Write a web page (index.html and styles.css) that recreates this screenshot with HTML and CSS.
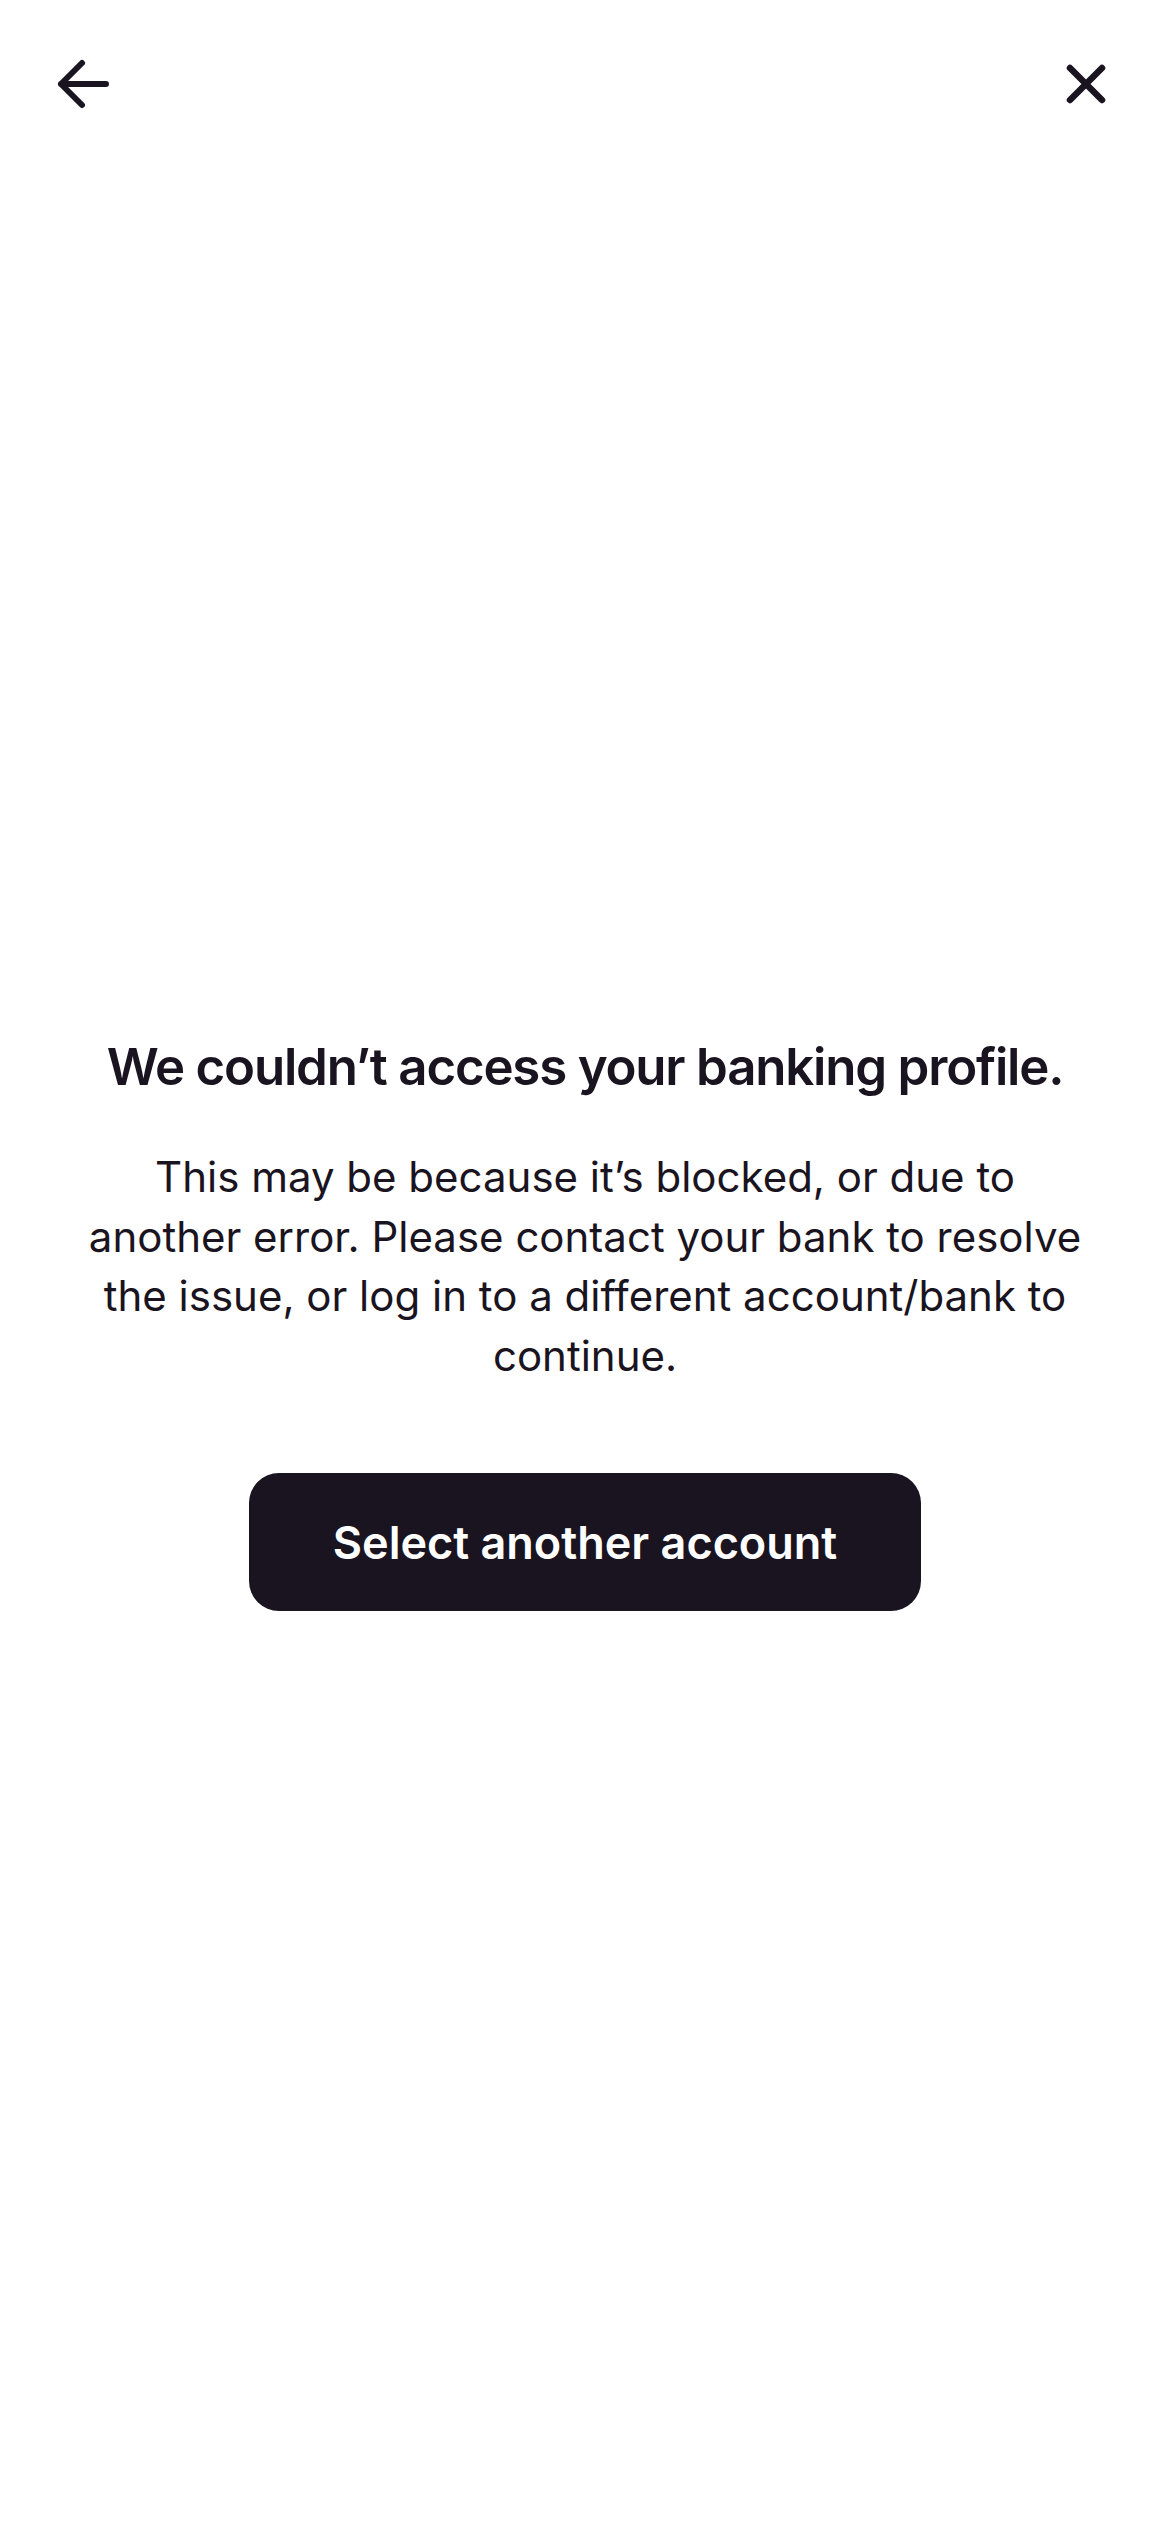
FILE: index.html
```html
<!DOCTYPE html>
<html lang="en">
<head>
    <meta charset="UTF-8">
    <meta name="viewport" content="width=device-width, initial-scale=1.0">
    <title>Access error</title>
    <link rel="stylesheet" href="styles.css">
</head>
<body>
    <header class="top-bar">
        <button type="button" class="icon-btn back-btn" aria-label="Back">
            <svg width="56" height="56" viewBox="0 0 56 56" fill="none">
                <path d="M27 7 L6 28 L27 49 M6 28 L51 28" stroke="#1a1421" stroke-width="6" stroke-linecap="round" stroke-linejoin="round"/>
            </svg>
        </button>
        <button type="button" class="icon-btn close-btn" aria-label="Close">
            <svg width="48" height="48" viewBox="0 0 48 48" fill="none">
                <path d="M8 8 L40 40 M40 8 L8 40" stroke="#1a1421" stroke-width="6.5" stroke-linecap="round"/>
            </svg>
        </button>
    </header>

    <main class="message">
        <h1 class="title">We couldn’t access your banking profile.</h1>
        <p class="text">This may be because it’s blocked, or due to<br>
            another error. Please contact your bank to resolve<br>
            the issue, or log in to a different account/bank to<br>
            continue.</p>
        <button type="button" class="primary-btn">Select another account</button>
    </main>
</body>
</html>
```

FILE: styles.css
```css
body {
    font-family: Inter, "Noto Sans", sans-serif;
    background-color: #ffffff;
    color: #1a1421;
    margin: 0;
    padding: 0;
}

.top-bar {
    display: flex;
    justify-content: space-between;
    align-items: center;
    padding: 56px 60px 0 55px;
}

.icon-btn {
    background: none;
    border: none;
    padding: 0;
    display: flex;
    cursor: pointer;
}

.message {
    display: flex;
    flex-direction: column;
    align-items: center;
    text-align: center;
    padding: 925px 40px 0;
}

.title {
    font-size: 51px;
    font-weight: 600;
    letter-spacing: -1.2px;
    line-height: 60px;
    margin: 0;
}

.text {
    font-size: 42px;
    font-weight: 400;
    line-height: 59.5px;
    margin: 50px 0 0;
}

.primary-btn {
    margin-top: 88px;
    width: 672px;
    height: 138px;
    background-color: #1a1421;
    color: #ffffff;
    border: none;
    border-radius: 30px;
    font-family: Inter, "Noto Sans", sans-serif;
    font-size: 45px;
    font-weight: 600;
    cursor: pointer;
}
```
